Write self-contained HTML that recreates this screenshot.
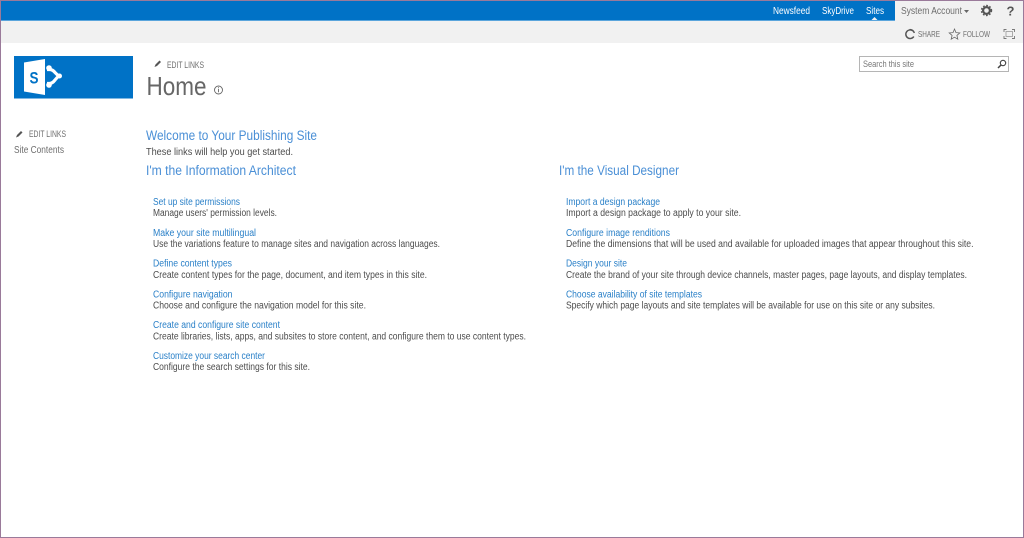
<!DOCTYPE html>
<html><head><meta charset="utf-8"><title>Home</title>
<style>
html,body{margin:0;padding:0;background:#fff}
body{width:1024px;height:538px;overflow:hidden}
svg{display:block;filter:blur(.3px)}
text{font-family:"Liberation Sans",sans-serif;font-size:10px}
.l{fill:#2a80c8}.d{fill:#4c4c4c}.h{fill:#4a8fd6;font-size:13.5px}.g{fill:#6e6e6e}.w{fill:#fff}
</style></head><body>
<svg width="1024" height="538" viewBox="0 0 1024 538" xmlns="http://www.w3.org/2000/svg">
<rect width="1024" height="538" fill="#fff"/>
<rect x="0" y="20" width="1024" height="23" fill="#f1f1f1"/>
<rect x="0" y="0" width="895" height="20" fill="#0072c6"/>
<rect x="0" y="20" width="895" height="1" fill="#5aa5dc"/>
<rect x="895" y="0" width="129" height="20" fill="#f1f1f1"/>
<path d="M871.5 20l3-3 3 3z" fill="#f1f1f1"/>
<text class="w" x="773" y="14" textLength="37" lengthAdjust="spacingAndGlyphs">Newsfeed</text>
<text class="w" x="822" y="14" textLength="32" lengthAdjust="spacingAndGlyphs">SkyDrive</text>
<text class="w" x="866" y="14" textLength="18" lengthAdjust="spacingAndGlyphs">Sites</text>
<text class="g" x="901" y="14" textLength="61" lengthAdjust="spacingAndGlyphs">System Account</text>
<path d="M964 10h5l-2.500 3z" fill="#666"/>
<circle cx="986.500" cy="10.500" r="3.400" fill="none" stroke="#555" stroke-width="2.200"/>
<circle cx="986.500" cy="10.500" r="5" fill="none" stroke="#555" stroke-width="1.400" stroke-dasharray="1.700 1.600"/>
<text x="1010.500" y="15.500" text-anchor="middle" style="font-size:13px;font-weight:bold;fill:#555">?</text>
<path d="M913 31a4.300 4.300 0 1 0 .8 5.500M909.500 29.700a4.300 4.300 0 0 1 4.800 3.300" fill="none" stroke="#555" stroke-width="1.500"/>
<text class="g" x="918" y="37" textLength="22" lengthAdjust="spacingAndGlyphs" style="font-size:8.500px">SHARE</text>
<path d="M954.500 29l1.500 3.600 3.800.3-2.900 2.500.9 3.800-3.300-2-3.300 2 .9-3.800-2.900-2.500 3.800-.3z" fill="none" stroke="#666" stroke-width=".8"/>
<text class="g" x="963" y="37" textLength="27" lengthAdjust="spacingAndGlyphs" style="font-size:8.500px">FOLLOW</text>
<path d="M1004 32v-2.500h2.500M1012 29.500h2.500v2.500M1014.500 36v2.500H1012M1006.500 38.500H1004V36" fill="none" stroke="#777" stroke-width=".9"/>
<rect x="1006" y="31.500" width="6.500" height="5" fill="none" stroke="#999" stroke-width=".8"/>

<rect x="14" y="56" width="119" height="42.500" fill="#0072c6"/>
<path d="M24 62.500 45 59V95l-21-3.500z" fill="#fff"/>
<text x="34" y="83.500" text-anchor="middle" textLength="9" lengthAdjust="spacingAndGlyphs" style="font-size:17px;font-weight:bold;fill:#0072c6">S</text>
<path d="M47 69.500h2.500c2.500 0 4 1 5.500 3l3.500 3.500-3.500 4c-1.500 2-3 3.500-5.500 3.500H47" fill="none" stroke="#fff" stroke-width="3.200"/>
<circle cx="49" cy="68" r="2.800" fill="#fff"/><circle cx="49" cy="85" r="2.800" fill="#fff"/><circle cx="59.500" cy="76" r="2.500" fill="#fff"/>

<path d="M154.500 67l1-2.500 4-4 1.500 1.500-4 4z" fill="#555"/>
<text class="g" x="167" y="68" textLength="37" lengthAdjust="spacingAndGlyphs" style="font-size:9.500px">EDIT LINKS</text>
<text x="146.500" y="95" textLength="60" lengthAdjust="spacingAndGlyphs" style="font-size:26px;fill:#666">Home</text>
<circle cx="218.500" cy="90" r="4" fill="none" stroke="#666" stroke-width=".9"/>
<path d="M218.500 89v3.200M218.500 87.300v1" stroke="#666" stroke-width=".9"/>

<rect x="859.500" y="56.500" width="149" height="15" fill="#fff" stroke="#b5b5b5"/>
<text x="863" y="67" textLength="51" lengthAdjust="spacingAndGlyphs" style="fill:#777;font-size:9.500px">Search this site</text>
<circle cx="1003" cy="63" r="2.700" fill="none" stroke="#444" stroke-width="1.100"/>
<path d="M1001 65l-3 3" stroke="#444" stroke-width="1.500"/>

<path d="M16 137.500l1-2.500 4-4 1.500 1.500-4 4z" fill="#555"/>
<text class="g" x="29" y="137" textLength="37" lengthAdjust="spacingAndGlyphs" style="font-size:9.500px">EDIT LINKS</text>
<text class="g" x="14" y="153" textLength="50" lengthAdjust="spacingAndGlyphs">Site Contents</text>

<text class="h" x="146" y="140" textLength="171" lengthAdjust="spacingAndGlyphs">Welcome to Your Publishing Site</text>
<text class="d" x="146" y="155" textLength="147" lengthAdjust="spacingAndGlyphs">These links will help you get started.</text>
<text class="h" x="146" y="175" textLength="150" lengthAdjust="spacingAndGlyphs">I'm the Information Architect</text>
<text class="h" x="559" y="175" textLength="120" lengthAdjust="spacingAndGlyphs">I'm the Visual Designer</text>

<text class="l" x="153" y="205" textLength="87" lengthAdjust="spacingAndGlyphs">Set up site permissions</text>
<text class="d" x="153" y="216" textLength="124" lengthAdjust="spacingAndGlyphs">Manage users' permission levels.</text>
<text class="l" x="153" y="236" textLength="103" lengthAdjust="spacingAndGlyphs">Make your site multilingual</text>
<text class="d" x="153" y="247" textLength="287" lengthAdjust="spacingAndGlyphs">Use the variations feature to manage sites and navigation across languages.</text>
<text class="l" x="153" y="266.500" textLength="79" lengthAdjust="spacingAndGlyphs">Define content types</text>
<text class="d" x="153" y="278" textLength="274" lengthAdjust="spacingAndGlyphs">Create content types for the page, document, and item types in this site.</text>
<text class="l" x="153" y="297.500" textLength="79.500" lengthAdjust="spacingAndGlyphs">Configure navigation</text>
<text class="d" x="153" y="308.500" textLength="213" lengthAdjust="spacingAndGlyphs">Choose and configure the navigation model for this site.</text>
<text class="l" x="153" y="328" textLength="127" lengthAdjust="spacingAndGlyphs">Create and configure site content</text>
<text class="d" x="153" y="339.500" textLength="373" lengthAdjust="spacingAndGlyphs">Create libraries, lists, apps, and subsites to store content, and configure them to use content types.</text>
<text class="l" x="153" y="359" textLength="112" lengthAdjust="spacingAndGlyphs">Customize your search center</text>
<text class="d" x="153" y="370" textLength="157" lengthAdjust="spacingAndGlyphs">Configure the search settings for this site.</text>

<text class="l" x="566" y="205" textLength="94" lengthAdjust="spacingAndGlyphs">Import a design package</text>
<text class="d" x="566" y="216" textLength="175" lengthAdjust="spacingAndGlyphs">Import a design package to apply to your site.</text>
<text class="l" x="566" y="236" textLength="104" lengthAdjust="spacingAndGlyphs">Configure image renditions</text>
<text class="d" x="566" y="247" textLength="407.500" lengthAdjust="spacingAndGlyphs">Define the dimensions that will be used and available for uploaded images that appear throughout this site.</text>
<text class="l" x="566" y="266.500" textLength="61" lengthAdjust="spacingAndGlyphs">Design your site</text>
<text class="d" x="566" y="278" textLength="401" lengthAdjust="spacingAndGlyphs">Create the brand of your site through device channels, master pages, page layouts, and display templates.</text>
<text class="l" x="566" y="297.500" textLength="136" lengthAdjust="spacingAndGlyphs">Choose availability of site templates</text>
<text class="d" x="566" y="308.500" textLength="369" lengthAdjust="spacingAndGlyphs">Specify which page layouts and site templates will be available for use on this site or any subsites.</text>

<rect x=".5" y=".5" width="1023" height="537" fill="none" stroke="#9a7a9a"/>
</svg>
</body></html>
